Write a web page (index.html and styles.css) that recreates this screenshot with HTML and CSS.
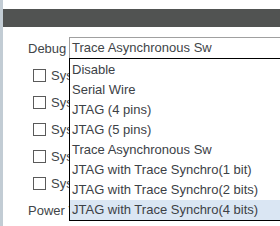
FILE: index.html
```html
<!DOCTYPE html>
<html lang="en">
<head>
    <meta charset="UTF-8">
    <title>SYS Mode</title>
    <link rel="stylesheet" href="styles.css">
</head>
<body>
    <div class="page">
        <div class="edge"></div>
        <div class="main">
            <div class="toolbar"></div>
            <div class="settings">
                <div class="field">
                    <span class="label">Debug</span>
                    <div class="select">Trace Asynchronous Sw</div>
                </div>
                <div class="check"><span class="box"></span><span class="text">System Wake-Up 1</span></div>
                <div class="check"><span class="box"></span><span class="text">System Wake-Up 2</span></div>
                <div class="check"><span class="box"></span><span class="text">System Wake-Up 3</span></div>
                <div class="check"><span class="box"></span><span class="text">System Wake-Up 4</span></div>
                <div class="check"><span class="box"></span><span class="text">System Wake-Up 5</span></div>
                <div class="field power">
                    <span class="label">Power Voltage Detector In</span>
                </div>
            </div>
        </div>
    </div>

    <ul class="dropdown">
        <li>Disable</li>
        <li>Serial Wire</li>
        <li>JTAG (4 pins)</li>
        <li>JTAG (5 pins)</li>
        <li>Trace Asynchronous Sw</li>
        <li>JTAG with Trace Synchro(1 bit)</li>
        <li>JTAG with Trace Synchro(2 bits)</li>
        <li class="active">JTAG with Trace Synchro(4 bits)</li>
    </ul>
</body>
</html>
```

FILE: styles.css
```css
body {
    margin: 0;
    width: 280px;
    height: 226px;
    overflow: hidden;
    position: relative;
    font-family: "Liberation Sans", Arial, sans-serif;
    font-size: 13px;
    color: #414548;
    background: white;
}

.page {
    display: flex;
    height: 226px;
}

.edge {
    width: 3px;
    background: #c2ccd4;
}

.main {
    flex: 1;
    min-width: 0;
    padding-top: 9px;
    overflow: hidden;
}

.toolbar {
    height: 18px;
    background: #515352;
}

.settings {
    padding-top: 10px;
}

.field {
    display: flex;
    align-items: center;
    padding-left: 25px;
}

.label {
    flex: none;
    width: 41px;
    white-space: nowrap;
}

.select {
    flex: none;
    width: 240px;
    height: 22px;
    box-sizing: border-box;
    border: 1px solid #a0a0a0;
    padding-left: 2px;
    line-height: 20px;
    white-space: nowrap;
    overflow: hidden;
}

.settings .field:first-child {
    margin-bottom: 3px;
}

.check {
    display: flex;
    align-items: center;
    height: 27px;
    padding-left: 30px;
    white-space: nowrap;
}

.box {
    flex: none;
    width: 13px;
    height: 13px;
    box-sizing: border-box;
    border: 1px solid #5a5a5a;
    background: white;
    margin-right: 5px;
}

/* the rest of these texts is hidden under the open list */
.check .text {
    width: 18px;
    overflow: hidden;
}

.power {
    height: 27px;
}

.power .label {
    width: 41px;
    overflow: hidden;
}

.dropdown {
    position: absolute;
    left: 69px;
    top: 58px;
    width: 240px;
    margin: 0;
    padding: 1px 0 0;
    list-style: none;
    background: white;
    border: 1px solid black;
    color: #3c4146;
}

.dropdown li {
    height: 20px;
    line-height: 20px;
    padding-left: 2px;
    white-space: nowrap;
}

.dropdown li.active {
    background: #dae6f3;
}
```
